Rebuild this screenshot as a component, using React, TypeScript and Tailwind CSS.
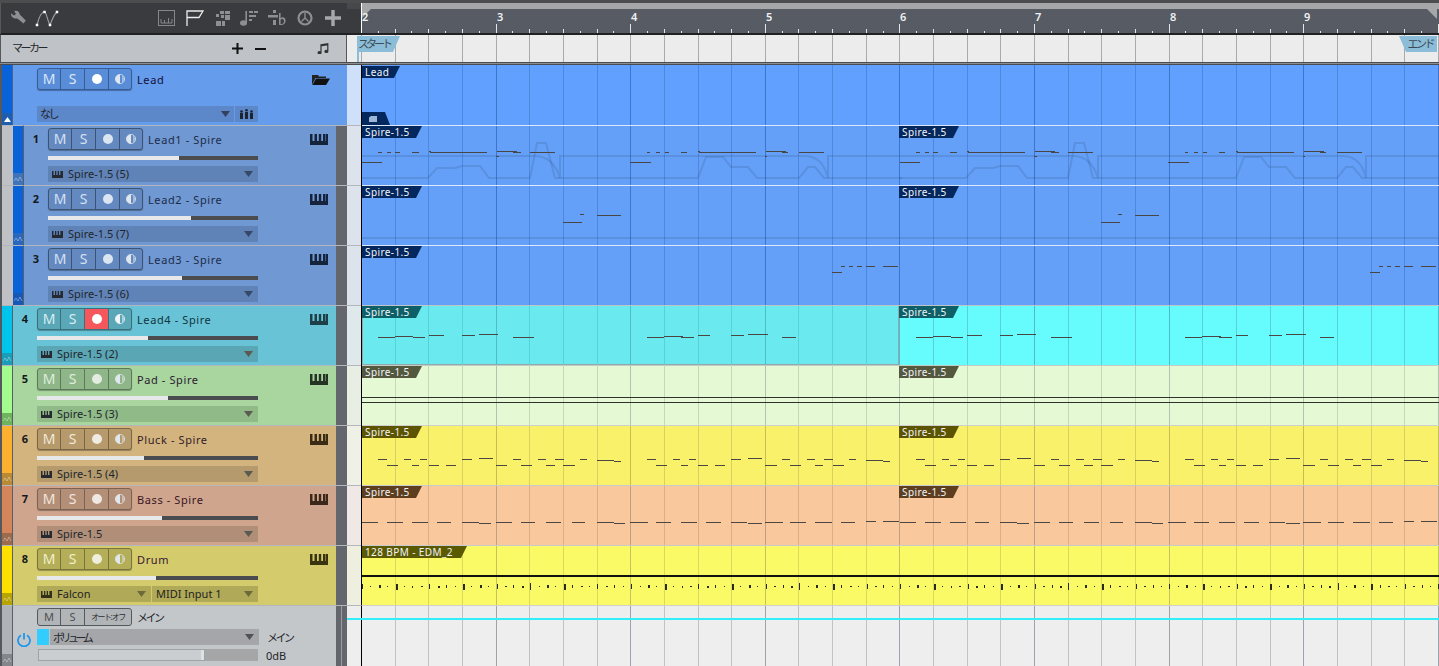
import React from "react";

type Note = [number, number, number];
const BAR = 134.6;
const REPEAT = 538.4;
const zx = (z: number) => z / 2.8 - 1;

const beats = Array.from({ length: 33 }, (_, i) => i);

function Grid({ beat, bar }: { beat: string; bar: string }) {
  return (
    <>
      {beats.map((i) => (
        <div
          key={i}
          className={`absolute top-0 bottom-0 w-px ${i % 4 === 0 ? bar : beat}`}
          style={{ left: Math.round((i * BAR) / 4) - 1 }}
        />
      ))}
    </>
  );
}

function Notes({ notes, color = "#4a4644", extra }: { notes: Note[]; color?: string; extra?: React.ReactNode }) {
  return (
    <svg className="absolute top-0 left-[-1px]" width={1079} height={60} shapeRendering="crispEdges">
      {extra}
      {[0, REPEAT].map((o) => (
        <g key={o} transform={`translate(${o} 0)`}>
          {notes.map(([y, a, b], i) => (
            <rect key={i} x={Math.round(zx(a))} y={y} width={Math.max(2, Math.round((b - a) / 2.8))} height={1} fill={color} />
          ))}
        </g>
      ))}
    </svg>
  );
}

const lead1: Note[] = [
  [37, 5, 61], [27, 50, 60], [27, 76, 87], [27, 99, 112], [27, 146, 165], [26, 193, 198], [27, 195, 355],
  [26, 384, 441], [27, 428, 451], [31, 382, 389], [27, 477, 546],
  [37, 757, 815], [27, 804, 813], [27, 829, 840], [27, 855, 865], [27, 899, 916], [26, 947, 952], [27, 949, 1108],
  [26, 1137, 1192], [27, 1182, 1200], [31, 1135, 1141], [27, 1229, 1298],
];
const lead2: Note[] = [[37, 568, 621], [29, 616, 627], [30, 664, 730]];
const lead3: Note[] = [[27, 1322, 1351], [21, 1347, 1358], [21, 1368, 1380], [21, 1392, 1405], [21, 1417, 1441], [21, 1465, 1508]];
const lead4: Note[] = [
  [32, 50, 98], [31, 98, 148], [32, 148, 182], [30, 193, 235], [30, 286, 322], [29, 333, 386], [32, 428, 487],
  [32, 804, 851], [31, 851, 904], [32, 900, 935], [30, 946, 980], [30, 1040, 1075], [29, 1086, 1141], [32, 1182, 1221],
];
const pluck: Note[] = [
  [34, 50, 76], [40, 76, 106], [34, 123, 143], [40, 146, 165], [34, 168, 188], [40, 193, 222], [40, 241, 269], [34, 286, 314], [33, 333, 372],
  [40, 382, 414], [34, 428, 451], [40, 451, 482], [34, 498, 521], [40, 521, 546], [34, 546, 571], [40, 569, 602], [34, 616, 636], [35, 664, 711], [36, 711, 731],
  [34, 804, 829], [40, 829, 860], [34, 876, 896], [40, 899, 918], [34, 921, 941], [40, 946, 975], [40, 994, 1023], [34, 1040, 1067], [33, 1086, 1125],
  [40, 1135, 1168], [34, 1182, 1204], [40, 1204, 1236], [34, 1252, 1275], [40, 1275, 1298], [34, 1299, 1323], [40, 1323, 1355], [34, 1369, 1389], [35, 1417, 1464], [36, 1464, 1484],
];
const bass: Note[] = [
  [37, 5, 50], [37, 76, 120], [37, 146, 190], [37, 216, 255], [37, 286, 333], [38, 333, 367], [37, 382, 428], [37, 451, 490], [37, 521, 564], [37, 594, 630], [37, 664, 711], [38, 711, 742],
  [37, 757, 806], [37, 829, 870], [37, 899, 945], [37, 969, 1011], [37, 1040, 1086], [38, 1086, 1126], [37, 1135, 1184], [37, 1204, 1249], [37, 1274, 1322], [37, 1347, 1387], [36, 1417, 1445], [36, 1465, 1509],
];

const autoColor = "rgba(50,85,140,.22)";
const lead1Auto = (
  <g fill="none" stroke={autoColor} strokeWidth={2} shapeRendering="auto">
    <path d="M0 31H174Q192 31 199 53V31H445Q462 32 467 53V31H712Q730 31 737 53V31H983Q1000 32 1005 53V31H1079" />
    {[0, 538].map((o) => (
      <path key={o} transform={`translate(${o} 0)`} d="M0 53H67L76 43H94L101 41H119L128 53H169L176 18H185L194 53H337L345 32H362L370 42H387L396 53H438L447 42H454L463 53H541" />
    ))}
  </g>
);

// one 32-step drum pattern: [width, height] of each sixteenth
const drumPattern: [number, number][] = [
  [1, 5], [1, 1], [2, 3], [1, 1], [2, 6], [1, 1], [1, 2], [2, 1],
  [1, 5], [2, 2], [1, 3], [1, 1], [2, 6], [1, 1], [2, 3], [1, 1],
  [1, 5], [2, 1], [1, 3], [2, 2], [1, 7], [1, 1], [2, 3], [1, 1],
  [2, 6], [1, 3], [2, 1], [1, 1], [1, 5], [2, 1], [1, 3], [1, 1],
];
const drumTicks = Array.from({ length: 129 }, (_, i) => {
  const [w, h] = drumPattern[i % 32];
  return { x: Math.round(i * 8.41) + 1, h, w };
});

function Keys({ small, color }: { small?: boolean; color: string }) {
  return small ? (
    <svg width="11" height="7" viewBox="0 0 11 7" fill={color} className="shrink-0">
      <path d="M0 0h1.5v4H3V0h1.3v4h1.4V0H7v4h1.4V0H10v0h1v7H0z" />
    </svg>
  ) : (
    <svg width="18" height="11" viewBox="0 0 18 11" fill={color} className="shrink-0">
      <path d="M0 0h2.5v7H4.5V0H7v7h1.8V0h2.4v7H13V0h2.5v7h.5V0H18v11H0z" />
    </svg>
  );
}

function Tri({ color = "#3f4a5c" }: { color?: string }) {
  return (
    <svg width="9" height="6" viewBox="0 0 9 6" className="shrink-0">
      <polygon points="0,0 9,0 4.5,6" fill={color} />
    </svg>
  );
}

function Half({ color }: { color: string }) {
  return (
    <svg width="10" height="10" viewBox="0 0 10 10">
      <circle cx="5" cy="5" r="4.6" fill="none" stroke={color} strokeWidth="0.8" />
      <path d="M5 0.4A4.6 4.6 0 0 0 5 9.6z" fill={color} />
      <path d="M7 1.5A4 4 0 0 1 7 8.5z" fill={color} opacity=".55" />
    </svg>
  );
}

function Buttons({ btn, line, ink, rec, dot }: { btn: string; line: string; ink: string; rec?: boolean; dot: string }) {
  return (
    <div className={`flex h-[22px] w-[95px] shrink-0 overflow-hidden rounded-[3px] border shadow-[0_1px_1px_rgba(0,0,0,.3)] ${btn} ${line}`}>
      <div className={`flex w-[23px] items-center justify-center border-r text-[14px] leading-none ${line} ${ink}`}>M</div>
      <div className={`flex w-[24px] items-center justify-center border-r text-[14px] leading-none ${line} ${ink}`}>S</div>
      <div className={`flex w-[24px] items-center justify-center border-r ${line} ${rec ? "bg-[#f6575c]" : ""}`}>
        <div className={`h-[10px] w-[10px] rounded-full ${rec ? "bg-white" : dot}`} />
      </div>
      <div className="flex flex-1 items-center justify-center">
        <Half color={rec ? "#f3f6f7" : "#dfe6ec"} />
      </div>
    </div>
  );
}

function Tag({ text, cls, w, left = 0, top = 1 }: { text: React.ReactNode; cls: string; w: string; left?: number; top?: number }) {
  return (
    <div
      className={`absolute flex h-[12px] items-center pl-[3px] text-[10px] leading-none tracking-[0.4px] text-[#f1f5f8] [clip-path:polygon(0_0,100%_0,calc(100%-6px)_100%,0_100%)] ${cls} ${w}`}
      style={{ left, top }}
    >
      {text}
    </div>
  );
}

type Track = {
  num: string;
  name: string;
  inst: string;
  sub?: boolean;
  fill: string;
  strip: string;
  auto: string;
  bg: string;
  btn: string;
  line: string;
  ink: string;
  dot: string;
  dd: string;
  gutter: string;
  clip: string;
  tag: string;
  nameInk: string;
  keys: string;
  beat: string;
  bar: string;
  sep: string;
};

const blue = {
  sub: true,
  strip: "bg-[#0a62d8]",
  bg: "bg-[#7098d2]",
  btn: "bg-[#6489c1]",
  line: "border-[#3d5372]",
  ink: "text-[#d5e0f0]",
  dot: "bg-[#dbe5f2]",
  dd: "bg-[#6083b7]",
  gutter: "bg-[#dde3ec]",
  clip: "bg-[#65a0f8]",
  tag: "bg-[#04275e]",
  nameInk: "text-[#1d2c4a]",
  keys: "#16233c",
  beat: "bg-[#4d88de]",
  bar: "bg-[#3d74cc]",
  sep: "bg-[#dbe8fb]",
};

const tracks: Track[] = [
  { ...blue, num: "1", name: "Lead1 - Spire", inst: "Spire-1.5 (5)", fill: "w-[131px]", auto: "bg-[#3f74bb]" },
  { ...blue, num: "2", name: "Lead2 - Spire", inst: "Spire-1.5 (7)", fill: "w-[143px]", auto: "bg-[#2a68bd]" },
  { ...blue, num: "3", name: "Lead3 - Spire", inst: "Spire-1.5 (6)", fill: "w-[134px]", auto: "bg-[#1558b5]" },
  {
    num: "4", name: "Lead4 - Spire", inst: "Spire-1.5 (2)", fill: "w-[111px]",
    strip: "bg-[#00c4ec]", auto: "bg-[#1b9cb8]", bg: "bg-[#69c3d6]", btn: "bg-[#5aa7b8]", line: "border-[#39707c]", ink: "text-[#d8edf1]", dot: "bg-white",
    dd: "bg-[#5aa6b5]", gutter: "bg-[#dfe8ea]", clip: "bg-[#66fbfd]", tag: "bg-[#0d6068]", nameInk: "text-[#12333c]", keys: "#1d4048", beat: "bg-[#56d2d8]", bar: "bg-[#4bbcc9]", sep: "bg-[#bcc6c8]",
  },
  {
    num: "5", name: "Pad - Spire", inst: "Spire-1.5 (3)", fill: "w-[131px]",
    strip: "bg-[#a2fc8e]", auto: "bg-[#6fb45c]", bg: "bg-[#a9d59f]", btn: "bg-[#8fb688]", line: "border-[#5c7a58]", ink: "text-[#dfeedd]", dot: "bg-[#e2ece0]",
    dd: "bg-[#90ba88]", gutter: "bg-[#e9eee4]", clip: "bg-[#e6f9d5]", tag: "bg-[#53583f]", nameInk: "text-[#2c2030]", keys: "#263426", beat: "bg-[#c6d8b8]", bar: "bg-[#b4c4ac]", sep: "bg-[#c6cbc2]",
  },
  {
    num: "6", name: "Pluck - Spire", inst: "Spire-1.5 (4)", fill: "w-[107px]",
    strip: "bg-[#fcb030]", auto: "bg-[#b98a34]", bg: "bg-[#d3b47e]", btn: "bg-[#b69a6c]", line: "border-[#7a6644]", ink: "text-[#f0e8da]", dot: "bg-[#f0ebe2]",
    dd: "bg-[#b49a6c]", gutter: "bg-[#eff0e6]", clip: "bg-[#faf16a]", tag: "bg-[#5d5400]", nameInk: "text-[#351b2a]", keys: "#3a2c14", beat: "bg-[#d8d060]", bar: "bg-[#c4bd58]", sep: "bg-[#cfd0cc]",
  },
  {
    num: "7", name: "Bass - Spire", inst: "Spire-1.5", fill: "w-[125px]",
    strip: "bg-[#d4865a]", auto: "bg-[#9c6a4c]", bg: "bg-[#cfa58d]", btn: "bg-[#b48f78]", line: "border-[#7c6252]", ink: "text-[#f0e6df]", dot: "bg-[#efe8e2]",
    dd: "bg-[#b08e78]", gutter: "bg-[#f0e8e4]", clip: "bg-[#f9c89d]", tag: "bg-[#5d3f1f]", nameInk: "text-[#3a1626]", keys: "#3c2818", beat: "bg-[#d9ae88]", bar: "bg-[#bda085]", sep: "bg-[#c9cacb]",
  },
  {
    num: "8", name: "Drum", inst: "Falcon", fill: "w-[119px]",
    strip: "bg-[#fee000]", auto: "bg-[#b8a400]", bg: "bg-[#d4cc6c]", btn: "bg-[#b5ae58]", line: "border-[#79743a]", ink: "text-[#f1eecb]", dot: "bg-[#efeddc]",
    dd: "bg-[#b0aa58]", gutter: "bg-[#efefe0]", clip: "bg-[#fafa66]", tag: "bg-[#5b5a00]", nameInk: "text-[#3a1630]", keys: "#38340f", beat: "bg-[#dada5c]", bar: "bg-[#c4c45e]", sep: "bg-[#c9cacb]",
  },
];

function Header({ t }: { t: Track }) {
  return (
    <div className={`flex h-full flex-1 border-t border-[#b3b6ba] ${t.bg}`}>
      <div className="w-[24px] shrink-0 pt-[6px] text-center text-[11px] font-bold leading-[14px] text-[#15181c]">{t.num}</div>
      <div className="flex flex-1 flex-col pt-[2px]">
        <div className="flex h-[22px] items-center">
          <Buttons btn={t.btn} line={t.line} ink={t.ink} dot={t.dot} rec={t.num === "4"} />
          <span className={`ml-[5px] pt-[2px] text-[11px] tracking-[0.6px] ${t.nameInk}`}>{t.name}</span>
          <div className="ml-auto mr-[8px]">
            <Keys color={t.keys} />
          </div>
        </div>
        <div className={`mt-[6px] h-[4px] bg-[#4a4c50] ${t.sub ? "w-[210px]" : "w-[221px]"}`}>
          <div className={`h-full bg-[#e6e8ea] ${t.fill}`} />
        </div>
        {t.num === "8" ? (
          <div className="mt-[6px] flex h-[16px] w-[221px] gap-px text-[11px] text-[#232320]">
            <div className={`flex w-[114px] items-center gap-[5px] pl-[4px] pr-[5px] ${t.dd}`}>
              <Keys small color="#33301a" />
              <span>Falcon</span>
              <span className="ml-auto"><Tri color="#6d6a3a" /></span>
            </div>
            <div className={`flex flex-1 items-center pl-[4px] pr-[5px] ${t.dd}`}>
              <span>MIDI Input 1</span>
              <span className="ml-auto"><Tri color="#6d6a3a" /></span>
            </div>
          </div>
        ) : (
          <div className={`mt-[6px] flex h-[16px] items-center gap-[5px] pl-[4px] pr-[5px] text-[11px] text-[#20252c] ${t.dd} ${t.sub ? "w-[210px]" : "w-[221px]"}`}>
            <Keys small color="#262a30" />
            <span>{t.inst}</span>
            <span className="ml-auto"><Tri color={t.sub ? "#37476a" : "#5a5a50"} /></span>
          </div>
        )}
      </div>
    </div>
  );
}

function StripCols({ t }: { t: Track }) {
  return (
    <>
      {t.sub && <div className="h-full w-[11px] shrink-0 border-t border-[#b3b6ba] bg-[#bfc1c4]" />}
      <div className={`flex h-full w-[11px] shrink-0 flex-col justify-end border-t border-r border-[#b3b6ba] border-r-[#56606a] ${t.strip}`}>
        <div className={`flex h-[12px] items-center justify-center ${t.auto}`}>
          <svg width="9" height="6" viewBox="0 0 9 6" fill="none" stroke="#ffffff" strokeOpacity=".45" strokeWidth=".8"><path d="M0 5l2-3 2 3 2-4 2 4" /></svg>
        </div>
      </div>
    </>
  );
}

function Timeline({ t, i }: { t: Track; i: number }) {
  const second = t.num !== "3" && t.num !== "8";
  const notes = [lead1, lead2, lead3, lead4, [], pluck, bass, []][i] as Note[];
  let extra: React.ReactNode = null;
  if (i === 0) extra = lead1Auto;
  if (i === 1) extra = <rect x="0" y="52" width="1079" height="2" fill={autoColor} />;
  if (i === 4) extra = (
    <>
      <rect x="0" y="32" width="1079" height="1" fill="#30332c" />
      <rect x="0" y="37" width="1079" height="1" fill="#30332c" />
    </>
  );
  if (i === 7) extra = (
    <>
      <rect x="0" y="30" width="1079" height="2" fill="#111" />
      {drumTicks.map((d, k) => (
        <rect key={k} x={d.x} y={42 - Math.ceil(d.h / 2)} width={d.w} height={d.h} fill="#2a2a22" />
      ))}
    </>
  );
  return (
    <div className={`relative h-full flex-1 overflow-hidden border-l border-black ${t.clip}`}>
      {i === 3 && <div className="absolute left-0 top-0 bottom-0 w-[537px] border border-[#93a6ab] bg-[#6aeaee]" />}
      <Grid beat={t.beat} bar={t.bar} />
      <Notes notes={notes} extra={extra} />
      <div className={`absolute left-0 right-0 top-0 h-px ${t.sep}`} />
      <Tag text={i === 7 ? "128 BPM - EDM_2" : "Spire-1.5"} cls={t.tag} w={i === 7 ? "w-[105px]" : "w-[60px]"} />
      {second && <Tag text="Spire-1.5" cls={t.tag} w="w-[60px]" left={537} />}
    </div>
  );
}

const rulerTicks = Array.from({ length: 65 }, (_, i) => i);

export default function App() {
  return (
    <div className="flex h-[666px] w-[1439px] flex-col overflow-hidden bg-[#3a3b3e] font-['Noto_Sans','Noto_Sans_CJK_JP',sans-serif]">
      <div className="h-[3px] shrink-0 bg-[#4b4d4f]" />
      {/* toolbar + ruler */}
      <div className="flex h-[32px] shrink-0 border-l border-[#56585a] border-b-2 border-b-[#202123] pl-px">
        <div className="flex w-[345px] items-center">
          <svg width="16" height="16" viewBox="0 0 16 16" className="ml-[8px]">
            <path d="M1 3.2L4 5.5 6 4 4.2 1.2C7 0 9.5 1.6 9.8 4.6L15.8 10.6 13.6 13.6 7.3 8.4C4 9 .8 7 1 3.2z" fill="#8d8f92" />
          </svg>
          <svg width="24" height="20" viewBox="0 0 24 20" className="ml-[9px]">
            <path d="M2 17C4 9 7 4 9.5 4c2 0 3 9 5.500 13 1.500-4 4-11 7-13" fill="none" stroke="#9a9c9f" strokeWidth="1.200" />
            {[[2, 17], [9.5, 4], [15, 17], [22, 4]].map(([x, y], k) => (
              <rect key={k} x={x - 1.25} y={y - 1.25} width="2.5" height="2.5" fill="#fff" />
            ))}
          </svg>
          <svg width="17" height="16" viewBox="0 0 17 16" className="ml-[99px]">
            <rect x=".5" y=".5" width="16" height="15" fill="none" stroke="#85878a" />
            <path d="M3 9v4H14V9M6.500 10v3M10.500 8v5" fill="none" stroke="#85878a" />
          </svg>
          <svg width="18" height="17" viewBox="0 0 18 17" className="ml-[11px]">
            <path d="M1 16V1H17L13 7.500H1" fill="none" stroke="#ececec" strokeWidth="1.300" />
          </svg>
          <svg width="15" height="15" viewBox="0 0 15 15" className="ml-[11px]" fill="#8d8f92">
            <path d="M1 3h3v3H1zM5 0h4v3H5zM10 0h5v3h-5zM6 4h3v3H6zM10 4h5v5h-5zM1 10h5v5H1zM7 10h3v5H7z" />
          </svg>
          <svg width="18" height="16" viewBox="0 0 18 16" className="ml-[10px]">
            <ellipse cx="3.500" cy="13" rx="3.500" ry="2.800" fill="#8d8f92" />
            <path d="M6.200 13V1" stroke="#8d8f92" strokeWidth="1.600" />
            <path d="M9 1h4v2H9zM14 1h4v2h-4zM9 5h7v2H9zM9 9h3v2H9z" fill="#8d8f92" />
          </svg>
          <svg width="18" height="16" viewBox="0 0 18 16" className="ml-[10px]" fill="#8d8f92">
            <path d="M5 0h3v3H5zM0 5h10v2.500H0zM5 10h3v5H5z" />
            <path fillRule="evenodd" d="M11 3h1.600v5c2.500-1.600 5-.5 5 2.800 0 3.500-3.300 5-6.600 4z M12.600 9.600v4.400c2.200.5 3.400-.9 3.400-2.900 0-1.900-1.600-2.700-3.400-1.500z" />
          </svg>
          <svg width="16" height="16" viewBox="0 0 16 16" className="ml-[11px]" fill="none" stroke="#8d8f92">
            <circle cx="8" cy="8" r="6.500" strokeWidth="2.200" />
            <path d="M8 8V2.500M8 8l-3.500 3.500M8 8l3.500 3.500" strokeWidth="1.400" />
          </svg>
          <svg width="16" height="16" viewBox="0 0 16 16" className="ml-[12px]" fill="#a6a8aa">
            <path d="M6.300 0h3.400v6.300H16v3.400H9.700V16H6.300V9.700H0V6.300h6.300z" />
          </svg>
        </div>
        <div className="w-[14px] shrink-0 border-t-[6px] border-[#46484b]" />
        <div className="relative flex-1 overflow-hidden bg-[#575b63]">
          <div className="h-[6px] bg-[#a5a7a8]" />
          <div className="absolute left-0 top-[6px] h-[10px] w-[10px] bg-[#a5a7a8] [clip-path:polygon(0_0,100%_0,0_100%)]" />
          <div className="absolute right-[2px] top-[6px] h-[10px] w-[10px] bg-[#a5a7a8] [clip-path:polygon(0_0,100%_0,100%_100%)]" />
          {rulerTicks.map((i) => (
            <div
              key={i}
              className={`absolute bottom-0 w-px bg-[#e4e5e6] ${i % 8 === 0 ? "h-[9px]" : i % 2 === 0 ? "h-[4px]" : "h-[2px]"}`}
              style={{ left: Math.round((i * BAR) / 8) }}
            />
          ))}
          {[2, 3, 4, 5, 6, 7, 8, 9].map((n, i) => (
            <span key={n} className="absolute top-[7px] text-[11px] font-semibold leading-[14px] text-[#eef2f5]" style={{ left: Math.round(i * BAR) + 1 }}>
              {n}
            </span>
          ))}
          <div className="absolute bottom-0 left-0 top-0 w-px bg-white" />
        </div>
      </div>
      {/* marker row */}
      <div className="flex h-[27px] shrink-0 border-l border-[#56585a]">
        <div className="flex w-[345px] items-center bg-[#bfc2c6] pl-[11px] pr-[17px] text-[11px] tracking-[-2.5px] text-[#25282c]">
          <span className="whitespace-nowrap">マーカー</span>
          <svg width="11" height="11" viewBox="0 0 11 11" className="ml-auto" fill="#111"><path d="M4.500 0h2v4.500H11v2H6.500V11h-2V6.500H0v-2h4.500z" /></svg>
          <svg width="11" height="2" viewBox="0 0 11 2" className="ml-[12px]" fill="#111"><rect width="11" height="2" /></svg>
          <svg width="12" height="11" viewBox="0 0 12 11" className="ml-[51px]" fill="#333">
            <path d="M3.400 1.200L11.400 0V8.400a2 1.600 0 1 1-1.200-1.400V2.400L4.600 3.300V9.600a2 1.600 0 1 1-1.200-1.400z" />
          </svg>
        </div>
        <div className="w-px bg-[#55585c]" />
        <div className="w-[14px] bg-[#ececec]" />
        <div className="relative flex-1 border-l border-black bg-[#ececec]">
          <Grid beat="bg-[#a8aaad]" bar="bg-[#a8aaad]" />
          <div className="absolute left-[-5px] top-[17px] bottom-0 w-[2px] bg-[#8bbdd8]" />
          <div className="absolute left-[-5px] top-[1px] flex h-[16px] w-[43px] items-center pl-[1px] text-[11px] tracking-[-3px] text-[#3b4a55] bg-[#8bbdd8] [clip-path:polygon(0_0,100%_0,calc(100%-7px)_100%,0_100%)]">
            <span className="whitespace-nowrap">スタート</span>
          </div>
          <div className="absolute right-[2px] top-[1px] flex h-[16px] w-[38px] items-center justify-end pr-[4px] text-[11px] tracking-[-2.5px] text-[#3b4a55] bg-[#8bbdd8] [clip-path:polygon(0_0,100%_0,100%_100%,7px_100%)]">
            <span className="whitespace-nowrap">エンド</span>
          </div>
        </div>
      </div>
      <div className="h-[3px] shrink-0 border-y border-[#4a4c4f] bg-[#8c8f92]" />
      {/* Lead folder */}
      <div className="flex h-[60px] shrink-0">
        <div className="h-full w-[2px] bg-[#55585c]" />
        <div className="flex h-full w-[11px] shrink-0 flex-col justify-end border-r border-[#44658f] bg-[#0a62d8]">
          <div className="flex h-[12px] items-center justify-center bg-[#1d5eae]">
            <svg width="7" height="5" viewBox="0 0 7 5"><polygon points="3.500,0 7,5 0,5" fill="#fff" /></svg>
          </div>
        </div>
        <div className="flex h-full w-[334px] bg-[#659cec] pl-[24px] pr-[17px]">
          <div className="flex flex-1 flex-col pt-[3px]">
            <div className="flex h-[22px] items-center">
              <Buttons btn="bg-[#5a8dd8]" line="border-[#375d96]" ink="text-[#dbe7f9]" dot="bg-white" />
              <span className="ml-[5px] pt-[2px] text-[11px] tracking-[0.6px] text-[#150f3a]">Lead</span>
              <svg width="18" height="11" viewBox="0 0 18 11" className="ml-auto">
                <path d="M0 1h6l1 1.500h7V4H3.500L0 11z" fill="#222" />
                <path d="M4 4.500h14L14 11H0.500z" fill="#111" />
              </svg>
            </div>
            <div className="mt-[16px] flex h-[16px] w-[221px] gap-px">
              <div className="flex flex-1 items-center bg-[#5c87c9] pl-[3px] pr-[4px] text-[11px] tracking-[-2.5px] text-[#1c2430]">
                <span className="whitespace-nowrap">なし</span>
                <span className="ml-auto"><Tri color="#33415f" /></span>
              </div>
              <div className="flex w-[23px] items-center justify-center bg-[#5c87c9]">
                <svg width="13" height="10" viewBox="0 0 13 10" fill="#1c2430">
                  <path d="M0 4h3v6H0zM5 3h3v7H5zM10 4h3v6h-3z" />
                  <circle cx="1.500" cy="2.500" r="1.300" />
                  <circle cx="6.500" cy="1.300" r="1.300" />
                  <circle cx="11.500" cy="2.500" r="1.300" />
                </svg>
              </div>
            </div>
          </div>
        </div>
        <div className="h-full w-[14px] shrink-0 bg-[#cfe0fb]" />
        <div className="relative h-full flex-1 overflow-hidden border-l border-black bg-[#61a0ff]">
          <Grid beat="bg-[#4d88de]" bar="bg-[#3d74cc]" />
          <Tag text="Lead" cls="bg-[#04275e]" w="w-[38px]" />
          <div className="absolute bottom-0 left-0 flex h-[13px] w-[28px] items-center pl-[7px] bg-[#04275e] [clip-path:polygon(0_0,calc(100%-5px)_0,100%_100%,0_100%)]">
            <svg width="8" height="6" viewBox="0 0 8 6"><path d="M0 1.500L2 0h6v6H0z" fill="#9db6d8" /></svg>
          </div>
        </div>
      </div>
      {/* tracks */}
      {tracks.map((t, i) => (
        <div key={t.num} className="flex h-[60px] shrink-0">
          <div className="h-full w-[2px] bg-[#55585c]" />
          <StripCols t={t} />
          <div className="flex h-full flex-1">
            <Header t={t} />
            <div className="h-full w-[11px] border-t border-[#b3b6ba] bg-[#63666c]" />
          </div>
          <div className={`h-full w-[14px] shrink-0 border-t border-[#b3b6ba] ${t.gutter}`} />
          <div className="flex h-full w-[1078px] shrink-0">
            <Timeline t={t} i={i} />
          </div>
        </div>
      ))}
      {/* main */}
      <div className="flex h-[61px] shrink-0">
        <div className="h-full w-[2px] bg-[#55585c]" />
        <div className="flex h-full w-[11px] shrink-0 flex-col justify-end border-t border-r border-[#b3b6ba] border-r-[#56606a] bg-[#b0b3b6]">
          <div className="flex h-[12px] items-center justify-center bg-[#83868a]">
            <svg width="9" height="6" viewBox="0 0 9 6" fill="none" stroke="#ffffff" strokeOpacity=".45" strokeWidth=".8"><path d="M0 5l2-3 2 3 2-4 2 4" /></svg>
          </div>
        </div>
        <div className="flex h-full w-[323px] border-t border-[#b3b6ba] bg-[#c4c7ca]">
          <div className="flex w-[24px] shrink-0 items-center justify-end pt-[8px] pr-[6px]">
            <svg width="14" height="14" viewBox="0 0 14 14" fill="none" stroke="#1f97ea" strokeWidth="1.800">
              <path d="M4 2.200A6 6 0 1 0 10 2.200" />
              <path d="M7 0v6.500" />
            </svg>
          </div>
          <div className="flex flex-1 flex-col pt-[2px]">
            <div className="flex h-[18px] items-center">
              <div className="flex h-[18px] w-[95px] overflow-hidden rounded-[3px] border border-[#55585c] bg-[#b2b5b8] text-[#4c4f53]">
                <div className="flex w-[23px] items-center justify-center border-r border-[#55585c] text-[11px]">M</div>
                <div className="flex w-[24px] items-center justify-center border-r border-[#55585c] text-[11px]">S</div>
                <div className="flex flex-1 items-center justify-center whitespace-nowrap text-[8px] tracking-[-1.5px] text-[#2c2e31]">オート: オフ</div>
              </div>
              <span className="ml-[5px] whitespace-nowrap text-[11px] leading-none tracking-[-2.5px] text-[#23262a]">メイン</span>
            </div>
            <div className="mt-[3px] flex h-[16px] items-center">
              <div className="h-[16px] w-[12px] bg-[#33ccff]" />
              <div className="ml-px flex h-[16px] w-[209px] items-center bg-[#a4a6aa] pl-[3px] pr-[5px] text-[11px] leading-none tracking-[-3.5px] text-[#24272b]">
                <span className="whitespace-nowrap">ボリューム</span>
                <span className="ml-auto"><Tri color="#505256" /></span>
              </div>
              <span className="ml-[8px] whitespace-nowrap text-[11px] leading-none tracking-[-2.5px] text-[#23262a]">メイン</span>
            </div>
            <div className="mt-[4px] flex h-[12px] items-center">
              <div className="flex h-[12px] w-[221px]">
                <div className="ml-px flex h-full w-[167px] justify-end border border-[#a0a2a5] bg-[#cbced1]">
                  <div className="h-full w-[3px] bg-[#dfe1e3]" />
                </div>
                <div className="h-full flex-1 bg-[#a4a6a8]" />
              </div>
              <span className="ml-[8px] text-[11px] leading-none text-[#23262a]">0dB</span>
            </div>
          </div>
        </div>
        <div className="flex h-full w-[11px] justify-center border-t border-[#b3b6ba] bg-[#63666c]">
          <div className="h-full w-px bg-[#9a9da1]" />
        </div>
        <div className="relative flex h-full flex-1">
          <div className="h-full w-[14px] border-t border-[#b3b6ba] bg-[#eeeeee]" />
          <div className="relative h-full flex-1 overflow-hidden border-l border-t border-black border-t-[#d0d0d0] bg-[#eeeeee]">
            <Grid beat="bg-[#c0c2c4]" bar="bg-[#9ea3ab]" />
          </div>
          <div className="absolute left-0 right-0 top-[13px] h-[2px] bg-[#33eef8]" />
        </div>
      </div>
    </div>
  );
}
